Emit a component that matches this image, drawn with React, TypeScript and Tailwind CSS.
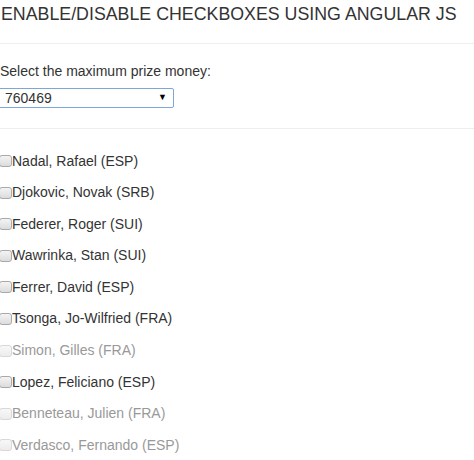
const players = [
  { name: 'Nadal, Rafael (ESP)', enabled: true },
  { name: 'Djokovic, Novak (SRB)', enabled: true },
  { name: 'Federer, Roger (SUI)', enabled: true },
  { name: 'Wawrinka, Stan (SUI)', enabled: true },
  { name: 'Ferrer, David (ESP)', enabled: true },
  { name: 'Tsonga, Jo-Wilfried (FRA)', enabled: true },
  { name: 'Simon, Gilles (FRA)', enabled: false },
  { name: 'Lopez, Feliciano (ESP)', enabled: true },
  { name: 'Benneteau, Julien (FRA)', enabled: false },
  { name: 'Verdasco, Fernando (ESP)', enabled: false },
];

function Box({ enabled }: { enabled: boolean }) {
  return (
    <span
      className={
        enabled
          ? 'inline-block w-[13px] h-[12px] -ml-[1px] rounded-[3px] border border-[#a9a9a9] bg-gradient-to-b from-[#f4f4f4] to-[#dcdcdc]'
          : 'inline-block w-[13px] h-[12px] -ml-[1px] rounded-[3px] border border-[#d8d8d8] bg-gradient-to-b from-[#f8f8f8] to-[#ececec]'
      }
    />
  );
}

export default function App() {
  return (
    <div className="w-[474px] h-[460px] bg-white text-[#333] font-['Liberation_Sans',Arial,sans-serif] overflow-hidden">
      <h1 className="pl-[1px] pt-[4px] text-[17.8px] leading-[20px] text-[#333]">
        ENABLE/DISABLE CHECKBOXES USING ANGULAR JS
      </h1>
      <hr className="mt-[19px] border-t border-[#eee]" />
      <div className="mt-[17px] text-[14px] leading-[20px]">Select the maximum prize money:</div>
      <div className="mt-[7px] -ml-[2px] w-[176px] h-[20px] flex items-center justify-between border border-[#7ea6d6] rounded-[2px] pl-[6px] pr-[6px] text-[14px]">
        <span>760469</span>
        <span className="text-[9px] text-black">▼</span>
      </div>
      <hr className="mt-[20px] border-t border-[#eee]" />
      <div className="mt-[22px] flex flex-col gap-[11.6px]">
        {players.map((p) => (
          <div key={p.name} className="flex items-center h-[20px] text-[14px]">
            <Box enabled={p.enabled} />
            <span className={p.enabled ? 'text-[#333]' : 'text-[#999]'}>{p.name}</span>
          </div>
        ))}
      </div>
    </div>
  );
}
